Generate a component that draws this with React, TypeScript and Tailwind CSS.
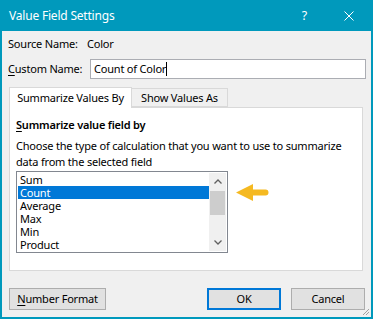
import React from 'react';

const items = ['Sum', 'Count', 'Average', 'Max', 'Min', 'Product'];

const Ul: React.FC<{ children: React.ReactNode }> = ({ children }) => (
  <span className="underline underline-offset-2 decoration-1">{children}</span>
);

export default function App() {
  return (
    <div
      className="relative w-[373px] h-[319px] flex flex-col border-l-2 border-r-2 border-b-2 border-[#0099bc] bg-[#f0f0f0] text-[11px] tracking-[-0.2px] leading-[16px] text-black whitespace-nowrap"
      style={{ fontFamily: '"Noto Sans", "Open Sans", sans-serif' }}
    >
      {/* Title bar */}
      <div className="h-[31px] -mx-[2px] bg-[#0099bc] flex items-center text-white">
        <span className="pl-[9px] text-[12px]">Value Field Settings</span>
        <span className="ml-auto mr-[37px] text-[12.5px]">?</span>
        <svg width="10" height="10" viewBox="0 0 10 10" className="mr-[19px]">
          <path d="M0.5 0.5 L9.5 9.5 M9.5 0.5 L0.5 9.5" stroke="white" strokeWidth="1" />
        </svg>
      </div>

      {/* Body */}
      <div className="flex flex-col pl-[6px] pr-[5px]">
        <div className="mt-[5px] flex">
          <span className="w-[79px] shrink-0">Source Name:</span>
          <span>Color</span>
        </div>

        <div className="mt-[7px] flex items-center">
          <span className="w-[82px] shrink-0">
            <Ul>C</Ul>ustom Name:
          </span>
          <div className="flex-1 h-[20px] border border-[#abadb3] bg-white flex items-center pl-[3px]">
            Count of Color
            <span className="w-px h-[14px] bg-black" />
          </div>
        </div>

        {/* Tabs */}
        <div className="mt-[8px] ml-[1px] flex items-end relative z-10">
          <div className="h-[21px] w-[123px] border border-b-0 border-[#d9d9d9] bg-white flex items-center justify-center -mb-px">
            Summarize Values By
          </div>
          <div className="h-[19px] w-[96px] border border-l-0 border-[#d9d9d9] bg-[#f0f0f0] flex items-center justify-center">
            Show Values As
          </div>
        </div>

        {/* Panel */}
        <div className="ml-[1px] mr-[3px] h-[164px] border border-[#d9d9d9] bg-white flex flex-col pl-[6px]">
          <div className="mt-[9px] font-semibold">
            <Ul>S</Ul>ummarize value field by
          </div>
          <div className="mt-[5px]">
            Choose the type of calculation that you want to use to summarize
            <br />
            data from the selected field
          </div>
          <div className="mt-[1px] flex items-start">
            <div className="w-[212px] h-[82px] border border-[#828790] bg-white p-px flex">
              <div className="flex-1 flex flex-col">
                {items.map((it) => (
                  <div
                    key={it}
                    className={`h-[13px] leading-[13px] pl-[2px] ${it === 'Count' ? 'bg-[#0078d7] text-white' : ''}`}
                  >
                    {it}
                  </div>
                ))}
              </div>
              <div className="w-[17px] bg-[#f0f0f0] flex flex-col items-center">
                <div className="h-[17px] flex items-center justify-center">
                  <svg width="8" height="5" viewBox="0 0 8 5">
                    <path d="M0.5 4.5 L4 1 L7.5 4.5" stroke="#606060" strokeWidth="1.3" fill="none" />
                  </svg>
                </div>
                <div className="w-[15px] h-[24px] mt-px bg-[#cdcdcd]" />
                <div className="mt-auto h-[17px] flex items-center justify-center">
                  <svg width="8" height="5" viewBox="0 0 8 5">
                    <path d="M0.5 0.5 L4 4 L7.5 0.5" stroke="#606060" strokeWidth="1.3" fill="none" />
                  </svg>
                </div>
              </div>
            </div>
            <svg width="33" height="17" viewBox="0 0 33 17" className="ml-[8px] mt-[13px]">
              <path d="M0 8.5 L17 0 L17 5.5 L29.5 5.5 A3 3 0 0 1 29.5 11.5 L17 11.5 L17 17 Z" fill="#f5b921" />
            </svg>
          </div>
        </div>

        {/* Buttons */}
        <div className="mt-[17px] flex items-center">
          <button className="ml-[1px] w-[97px] h-[22px] border border-[#adadad] bg-[#e1e1e1]">
            <Ul>N</Ul>umber Format
          </button>
          <button className="ml-auto w-[74px] h-[22px] border-2 border-[#0078d7] bg-[#e1e1e1]">OK</button>
          <button className="ml-[10px] mr-[1px] w-[74px] h-[22px] border border-[#adadad] bg-[#e1e1e1]">Cancel</button>
        </div>
      </div>

      {/* Size grip */}
      <svg width="8" height="8" viewBox="0 0 8 8" className="absolute right-[1px] bottom-[1px]">
        <path d="M7 1 L1 7 M7 4 L4 7" stroke="#a0a0a0" strokeWidth="1" />
      </svg>
    </div>
  );
}
